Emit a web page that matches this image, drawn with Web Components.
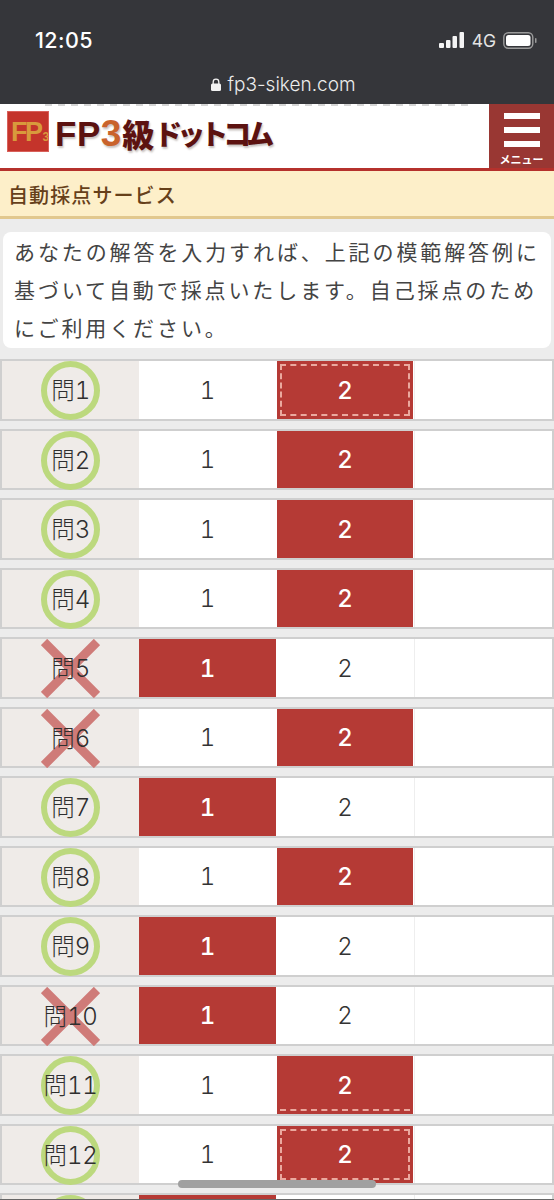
<!DOCTYPE html>
<html lang="ja"><head><meta charset="utf-8">
<style>
html,body{margin:0;padding:0;height:1200px;overflow:hidden;background:#ececec;font-family:"Noto Sans CJK JP","Noto Sans",sans-serif}
body{position:relative}
</style></head><body>
<phone-bar></phone-bar>
<site-header></site-header>
<title-band>自動採点サービス</title-band>
<intro-card>あなたの解答を入力すれば、上記の模範解答例に基づいて自動で採点いたします。自己採点のためにご利用ください。</intro-card>
<answer-list></answer-list>
<home-indicator></home-indicator>
<script>
function def(name,html,after){
  customElements.define(name,class extends HTMLElement{
    connectedCallback(){
      if(this.shadowRoot)return;
      this.attachShadow({mode:'open'}).innerHTML=html;
      if(after)after(this);
    }
  });
}
def('phone-bar',`<style>
:host{display:block;height:104px;background:#35363a;color:#fff;font-family:Inter,"Liberation Sans",sans-serif;box-sizing:border-box;padding:26px 17px 0 35px}
.top{display:flex;justify-content:space-between;align-items:center;height:27px}
.time{font-size:21.500px;font-weight:500;letter-spacing:.4px}
.right{display:flex;align-items:center;gap:8px;color:#e4e4e4;margin-top:1px}
.net{font-size:17.500px;margin-right:-1px}
.url{display:flex;justify-content:center;align-items:center;gap:7px;margin-top:17px;margin-left:-6px;font-size:19px;color:#ececec;height:28px;font-weight:300}
svg{display:block}
</style>
<div class="top"><span class="time">12:05</span><span class="right">
<svg width="25" height="16" viewBox="0 0 25 16" fill="#f4f4f4"><rect x="0" y="11" width="5" height="5" rx="1"/><rect x="7" y="8" width="4.500" height="8" rx="1"/><rect x="13.500" y="4" width="4.500" height="12" rx="1"/><rect x="20.500" y="0" width="4.500" height="16" rx="1"/></svg>
<span class="net">4G</span>
<svg width="34" height="17" viewBox="0 0 34 17"><rect x=".8" y=".8" width="29" height="15.400" rx="4.500" fill="none" stroke="#9b9b9b" stroke-width="1.400"/><rect x="3" y="3" width="24.500" height="11" rx="2.500" fill="#fff"/><rect x="32" y="6" width="1.500" height="5" rx=".7" fill="#9b9b9b"/></svg>
</span></div>
<div class="url"><svg width="10" height="13" viewBox="0 0 10 13"><path d="M2.200 6V4a2.800 2.800 0 0 1 5.600 0v2" fill="none" stroke="#f2f2f2" stroke-width="1.300"/><rect x="0" y="5.500" width="10" height="7.500" rx="1.500" fill="#f2f2f2"/></svg><span>fp3-siken.com</span></div>`);
def('site-header',`<style>
:host{display:flex;height:67px;box-sizing:border-box;background:#fff;border-bottom:3px solid #b5312c;position:relative}
:host::before{content:"";position:absolute;left:45px;right:85px;top:0;height:1.500px;background:repeating-linear-gradient(90deg,#b9b9b9 0 7px,transparent 7px 13px);opacity:.6}
.logo{flex:1;display:flex;align-items:flex-start;padding:7px 0 0 7px;gap:6px}
.mark{width:42px;height:41px;background:#c4342b;color:#d89a3c;font:700 27px/41px "Liberation Sans",sans-serif;letter-spacing:-2.500px;padding-left:3px;box-sizing:border-box;white-space:nowrap;overflow:hidden;border:1px solid #d9605a}
.mark small{font-size:12px;letter-spacing:0;margin-left:2px}
.name{font:900 32px/1 "Noto Sans CJK JP",sans-serif;color:#5c1210;display:flex;align-items:center;height:36px;text-shadow:1px 2px 2px #c9c3c0;white-space:nowrap;margin-top:4px}
.name b{font:700 35px/1 "Liberation Sans",sans-serif;letter-spacing:.5px}
.name i{font:700 37px/1 "Liberation Sans",sans-serif;color:#c9632c;margin-right:1px}
.name em{font-style:normal;font-size:28px;letter-spacing:-5px;margin-left:0}
.menu{width:65px;background:#993733;display:flex;flex-direction:column;align-items:center;padding-top:9px;box-sizing:border-box;gap:8px}
.menu u{display:block;width:36px;height:6px;background:#fff}
.menu span{font:700 11px/1 "Noto Sans CJK JP",sans-serif;color:#fff;margin-top:-1px;white-space:nowrap}
</style>
<div class="logo"><div class="mark">FP<small>3</small></div><div class="name"><b>FP</b><i>3</i><span>級</span><em>ドットコム</em></div></div>
<div class="menu"><u></u><u></u><u></u><span>メニュー</span></div>`);
def('title-band',`<style>
:host{display:block;height:48px;box-sizing:border-box;background:#fdefc9;border-bottom:3px solid #e2c88e;color:#66401a;font:500 20px/47px "Noto Sans CJK JP",sans-serif;padding-left:8px;letter-spacing:1.100px}
</style><slot></slot>`);
def('intro-card',`<style>
:host{display:block;margin:13px 3px 11px;background:#fff;border-radius:8px;padding:0 9px 0 11px;height:116px;box-sizing:border-box;font:400 21px/38px "Noto Sans CJK JP",sans-serif;color:#444;letter-spacing:2.900px}
</style><slot></slot>`);
def('answer-row',`<style>
:host{display:grid;grid-template-columns:137px 137px 138px 1fr;height:61.500px;box-sizing:border-box;border:2px solid #cfcfcf;background:#fff;margin:0 0 8px 0;color:#333}
.sel.focus::after{content:"";position:absolute;inset:3px;border:2px dashed #eba99f}
.sel.edge::after{content:"";position:absolute;left:3px;right:3px;bottom:3px;border-bottom:2px dashed #eba99f}
.cell{position:relative;display:flex;align-items:center;justify-content:center;font:300 24px/1 Inter,"Noto Sans CJK JP",sans-serif;font-variant-numeric:tabular-nums;box-sizing:border-box;padding-top:2px}
.label{background:#efebe8}
.label span{position:relative;white-space:nowrap;font-family:Inter,"Noto Sans CJK JP",sans-serif;letter-spacing:-.3px;color:#2f2f2f}
.label span b{font:300 23.500px/1 "Noto Sans CJK JP",sans-serif;letter-spacing:0}
.mark{position:absolute;left:39px;top:0;width:59px;height:59px}
.sel{background:#b53a35;color:#fff;font-weight:500}
.o2{margin:0 1px}
.c3{border-left:1px solid #eee}
</style>
<div class="cell label"><svg class="mark" viewBox="0 0 59 59"></svg><span></span></div>
<div class="cell o1"></div><div class="cell o2"></div><div class="cell c3"></div>`,
r=>{
  const s=r.shadowRoot, n=r.getAttribute('n');
  const lab=s.querySelector('.label span');
  if(n){
    const b=document.createElement('b');b.textContent='問';
    lab.append(b,n);
    s.querySelector('.o1').textContent='1';
    s.querySelector('.o2').textContent='2';
  }
  s.querySelector('.mark').innerHTML=r.getAttribute('res')==='x'
   ?'<path d="M3 3L56 56M56 3L3 56" stroke="#cf7b78" stroke-width="9" fill="none"/>'
   :'<circle cx="29.500" cy="29.500" r="26.500" fill="none" stroke="#bcd97e" stroke-width="6"/>';
  const sel=s.querySelector(r.getAttribute('sel')==='1'?'.o1':'.o2');
  sel.classList.add('sel');
  const f=r.getAttribute('dash');
  if(f)sel.classList.add(f);
});
def('answer-list',`<style>:host{display:block;height:841px;overflow:hidden}</style><div id="l"></div>`,
h=>{
  const d=[[1,'o',2,'focus'],[2,'o',2],[3,'o',2],[4,'o',2],[5,'x',1],[6,'x',2],[7,'o',1],[8,'o',2],[9,'o',1],[10,'x',1],[11,'o',2,'edge'],[12,'o',2,'focus'],[0,'o',1]];
  const l=h.shadowRoot.getElementById('l');
  for(const [n,res,sel,f] of d){
    const r=document.createElement('answer-row');
    if(n)r.setAttribute('n',n);
    r.setAttribute('res',res);r.setAttribute('sel',sel);
    if(f)r.setAttribute('dash',f);
    l.appendChild(r);
  }
});
def('home-indicator',`<style>:host{display:block;position:absolute;left:178px;top:1180px;width:198px;height:8px;border-radius:4px;background:#a0a0a0}:host::after{content:"";position:fixed;left:0;right:0;top:1199px;height:1px;background:#666}</style>`);
</script>
</body></html>
